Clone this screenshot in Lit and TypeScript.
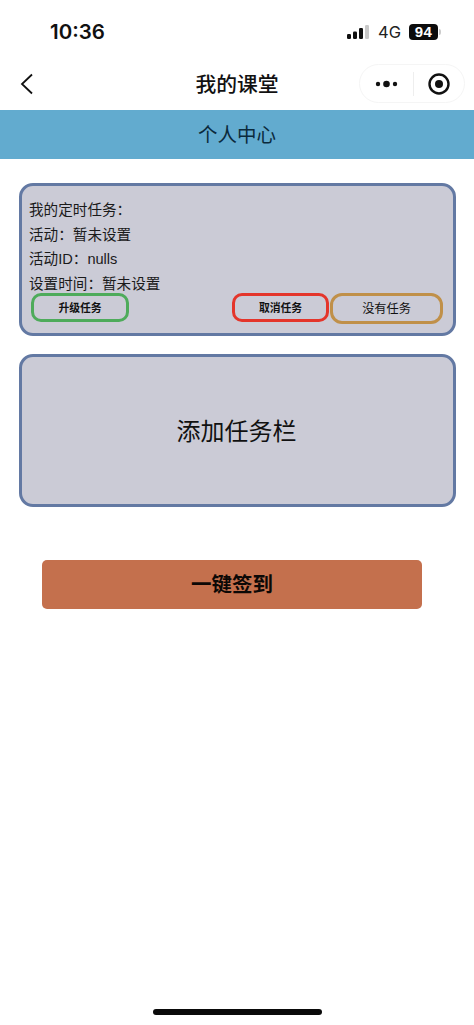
import { LitElement, html, css } from "lit";
import { customElement } from "lit/decorators.js";

@customElement("app-root")
export class AppRoot extends LitElement {
  static styles = css`
    :host {
      display: block;
      width: 474px;
      height: 1025px;
      background: #fff;
      color: #111;
      font-family: "Liberation Sans", "Noto Sans CJK SC", sans-serif;
      position: relative;
      overflow: hidden;
    }
    .status {
      height: 64px;
      box-sizing: border-box;
      padding: 20px 0 0 50px;
      display: flex;
      align-items: flex-start;
    }
    .time {
      font: 600 20.5px/24px Inter, "Liberation Sans", sans-serif;
      color: #111;
      width: 297px;
    }
    .status-right {
      display: flex;
      align-items: center;
      height: 24px;
    }
    .signal { display: block; width: 24px; height: 16px; }
    .net {
      font: 400 16.5px/24px Inter, "Liberation Sans", sans-serif;
      margin-left: 7px;
      color: #222;
    }
    .battery {
      margin-left: 8px;
      width: 29px;
      height: 16px;
      border-radius: 4px;
      background: #0c0c0c;
      color: #fff;
      font: 700 15px/16px "Liberation Sans", sans-serif;
      text-align: center;
      letter-spacing: 0.4px;
    }
    .battery-tip {
      width: 2px;
      height: 6px;
      margin-left: 1px;
      background: #ccc;
      border-radius: 0 2px 2px 0;
    }
    .nav {
      height: 46px;
      display: grid;
      grid-template-columns: 1fr auto 1fr;
      align-items: start;
    }
    .back { display: block; margin: 9px 0 0 20px; width: 14px; height: 22px; }
    .title {
      font-size: 20.8px;
      font-weight: 500;
      font-family: "Noto Sans CJK SC", sans-serif;
      line-height: 40px;
      margin-top: -1px;
      color: #111;
    }
    .capsule {
      justify-self: end;
      margin-right: 9px;
      width: 106px;
      height: 39px;
      box-sizing: border-box;
      border: 1px solid #f5f5f5;
      border-radius: 20px;
      display: flex;
      align-items: center;
    }
    .more { display: block; width: 24px; height: 8px; margin-left: 15px; }
    .sep { width: 1px; height: 24px; background: #eee; margin-left: 14px; }
    .record { display: block; width: 22px; height: 22px; margin-left: 14px; }
    .banner {
      height: 49px;
      background: #62abcf;
      color: #0b2a3c;
      font-size: 19.5px;
      font-family: "Noto Sans CJK SC", sans-serif;
      line-height: 48px;
      text-align: center;
    }
    .content {
      padding: 24px 18px 0 19px;
      display: flex;
      flex-direction: column;
    }
    .card {
      height: 153px;
      box-sizing: border-box;
      border: 3px solid #6379a3;
      border-radius: 14px;
      background: #cbcbd6;
    }
    .task { padding: 12px 10px 0 7px; margin-bottom: 18px; }
    .line {
      font-size: 14.6px;
      line-height: 24.5px;
      color: #1a1a1a;
      white-space: nowrap;
    }
    .actions {
      display: flex;
      align-items: flex-start;
      margin-top: -3px;
      padding-left: 2px;
    }
    .pill {
      box-sizing: border-box;
      height: 29px;
      width: 98px;
      border: 3.5px solid;
      border-radius: 10px;
      font-size: 10.8px;
      font-weight: 700;
      font-family: "Noto Sans CJK SC", sans-serif;
      line-height: 22px;
      text-align: center;
      color: #111;
    }
    .green { border-color: #4eab5b; }
    .red { border-color: #e4352b; margin-left: auto; width: 97px; }
    .tan {
      border-color: #c09049;
      width: 113px;
      height: 31px;
      margin-left: 1px;
      border-radius: 12px;
      font-size: 12.2px;
      font-weight: 400;
      line-height: 24px;
    }
    .add {
      display: flex;
      align-items: center;
      justify-content: center;
      font-size: 24px;
      font-family: "Noto Sans CJK SC", sans-serif;
      padding: 0 2px 2px 0;
      color: #111;
    }
    .sign {
      margin: 53px 34px 0 23px;
      height: 49px;
      border-radius: 5px;
      background: #c4704d;
      color: #0c0806;
      font-size: 20.5px;
      font-weight: 700;
      font-family: "Noto Sans CJK SC", sans-serif;
      line-height: 47px;
      text-align: center;
    }
    .home {
      position: absolute;
      left: 153px;
      top: 1009px;
      width: 169px;
      height: 6px;
      border-radius: 3px;
      background: #0a0a0a;
    }
  `;

  render() {
    return html`
      <div class="status">
        <div class="time">10:36</div>
        <div class="status-right">
          <svg class="signal" viewBox="0 0 24 16" aria-hidden="true">
            <rect x="0" y="10" width="4" height="5" rx="1.2" fill="#111"></rect>
            <rect x="6" y="7.5" width="4" height="7.5" rx="1.2" fill="#111"></rect>
            <rect x="12" y="4" width="4" height="11" rx="1.2" fill="#111"></rect>
            <rect x="18" y="1" width="4" height="14" rx="1.2" fill="#c9c9c9"></rect>
          </svg>
          <span class="net">4G</span>
          <span class="battery">94</span>
          <span class="battery-tip"></span>
        </div>
      </div>
      <div class="nav">
        <svg class="back" viewBox="0 0 14 22" aria-hidden="true">
          <path d="M12 1.5 2 11l10 9.5" fill="none" stroke="#111" stroke-width="1.8"></path>
        </svg>
        <div class="title">我的课堂</div>
        <div class="capsule">
          <svg class="more" viewBox="0 0 24 8" aria-hidden="true">
            <circle cx="3" cy="4" r="2.2" fill="#111"></circle>
            <circle cx="11.5" cy="4" r="3.3" fill="#111"></circle>
            <circle cx="20" cy="4" r="2.2" fill="#111"></circle>
          </svg>
          <span class="sep"></span>
          <svg class="record" viewBox="0 0 22 22" aria-hidden="true">
            <circle cx="11" cy="11" r="9.5" fill="none" stroke="#111" stroke-width="2.4"></circle>
            <circle cx="11" cy="11" r="4" fill="#111"></circle>
          </svg>
        </div>
      </div>
      <div class="banner">个人中心</div>
      <div class="content">
        <div class="card task">
          <div class="line">我的定时任务：</div>
          <div class="line">活动：暂未设置</div>
          <div class="line">活动ID：nulls</div>
          <div class="line">设置时间：暂未设置</div>
          <div class="actions">
            <div class="pill green">升级任务</div>
            <div class="pill red">取消任务</div>
            <div class="pill tan">没有任务</div>
          </div>
        </div>
        <div class="card add">添加任务栏</div>
        <div class="sign">一键签到</div>
      </div>
      <div class="home"></div>
    `;
  }
}
